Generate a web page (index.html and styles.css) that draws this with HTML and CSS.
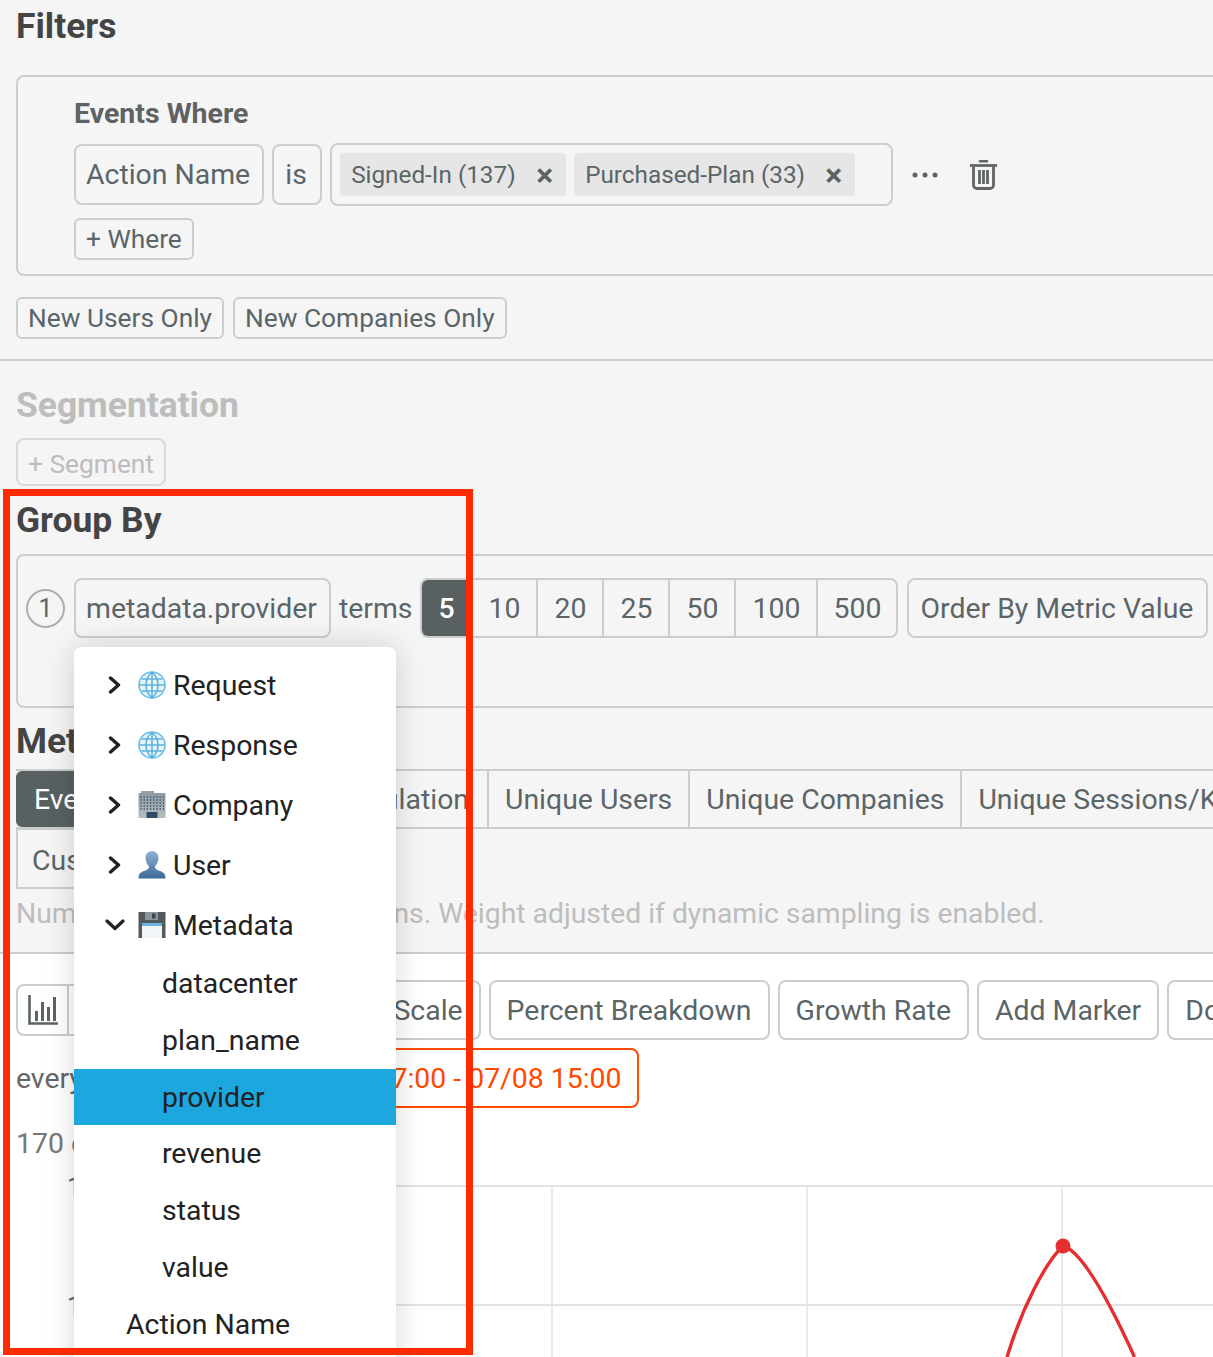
FILE: index.html
```html
<!DOCTYPE html>
<html lang="en">
<head>
<meta charset="utf-8">
<title>Filters</title>
<link rel="stylesheet" href="styles.css">
</head>
<body>
<svg class="defs" width="0" height="0" aria-hidden="true">
  <defs>
    <linearGradient id="userGrad" x1="0" y1="0" x2="0" y2="1"><stop offset="0" stop-color="#8fb3d3"/><stop offset="1" stop-color="#3d6a96"/></linearGradient>
    <linearGradient id="bldGrad" x1="0" y1="0" x2="0" y2="1"><stop offset="0" stop-color="#8f9aa3"/><stop offset="1" stop-color="#b6bec4"/></linearGradient>
    <symbol id="globe" viewBox="0 0 28 28">
      <circle cx="14" cy="14" r="13" fill="#e9f5fb" stroke="#6dc0e4" stroke-width="1.6"/>
      <path d="M1.5 14h25M3.5 8h21M3.5 20h21M14 1v26M14 1c-8 7-8 19 0 26M14 1c8 7 8 19 0 26" fill="none" stroke="#5cb2da" stroke-width="1.6"/>
    </symbol>
    <symbol id="building" viewBox="0 0 28 28">
      <rect x="3" y="0" width="13" height="3" fill="#9aa2a8"/>
      <rect x="0.5" y="2" width="27" height="25" fill="url(#bldGrad)"/>
      <path d="M3 5v15M6.200 5v15M9.400 5v15M12.600 5v15M15.800 5v15M19 5v15M22.200 5v15M25.400 5v15" stroke="#4a6172" stroke-width="1.200" stroke-dasharray="2 1"/>
      <rect x="8.500" y="21" width="11" height="6" fill="#2f4a63"/>
    </symbol>
    <symbol id="user" viewBox="0 0 28 28">
      <path d="M14 0c4 0 6.500 3 6.500 7s-2.300 7-3.500 8.500c0 2 1 3 5 4.500 4 1.500 5.500 3 5.500 7.500H.5c0-4.500 1.500-6 5.500-7.500s5-2.500 5-4.500C9.800 14 7.500 11 7.500 7S10 0 14 0z" fill="url(#userGrad)"/>
    </symbol>
    <symbol id="floppy" viewBox="0 0 28 28">
      <path d="M.5 1h27v26h-27z" fill="#52585c"/>
      <rect x="7" y="1" width="13" height="8" fill="#8d9499"/>
      <rect x="14" y="2.500" width="3.500" height="5" fill="#3e4347"/>
      <rect x="4" y="12" width="20" height="15" fill="#f2f5f7"/>
      <rect x="4" y="12" width="20" height="3" fill="#6fb0e3"/>
    </symbol>
    <symbol id="chev" viewBox="0 0 14 18"><path d="M2.500 2l8 7-8 7" fill="none" stroke="#222" stroke-width="3.400" stroke-linecap="round" stroke-linejoin="round"/></symbol>
    <symbol id="chevd" viewBox="0 0 20 14"><path d="M2 3l8 7.500L18 3" fill="none" stroke="#222" stroke-width="3.200" stroke-linecap="round" stroke-linejoin="round"/></symbol>
  </defs>
</svg>

<div class="top">
  <section class="filters">
    <h2>Filters</h2>
    <div class="box filter-box">
      <div class="label">Events Where</div>
      <div class="filter-row">
        <span class="btn tall">Action Name</span>
        <span class="btn tall is">is</span>
        <div class="tags">
          <span class="tag tag-a">Signed-In (137)<b class="x">×</b></span>
          <span class="tag tag-b">Purchased-Plan (33)<b class="x">×</b></span>
        </div>
        <svg class="dots" width="26" height="8" viewBox="0 0 26 8"><circle cx="3" cy="4" r="2.500"/><circle cx="13" cy="4" r="2.500"/><circle cx="23" cy="4" r="2.500"/></svg>
        <svg class="trash" width="27" height="30" viewBox="0 0 27 30"><path d="M10 1.300h7" stroke-width="2.600" stroke-linecap="round"/><path d="M0 5.500h27" stroke-width="2.800"/><path d="M3.500 7v18a3.500 3.500 0 0 0 3.500 3.500h13a3.500 3.500 0 0 0 3.500-3.500V7M9.500 10v14M13.500 10v14M17.500 10v14" stroke-width="2.800"/></svg>
      </div>
      <span class="btn small where">+ Where</span>
    </div>
    <div class="flags">
      <span class="btn small">New Users Only</span>
      <span class="btn small">New Companies Only</span>
    </div>
  </section>

  <section class="lower">
    <h2 class="muted-h">Segmentation</h2>
    <span class="btn segment">+ Segment</span>
    <h2 class="group-h">Group By</h2>
    <div class="box group-box">
      <div class="group-row">
        <span class="circle">1</span>
        <span class="btn tall">metadata.provider</span>
        <span class="terms">terms</span>
        <div class="seg">
          <span class="seg-i on">5</span><span class="seg-i">10</span><span class="seg-i">20</span><span class="seg-i">25</span><span class="seg-i">50</span><span class="seg-i">100</span><span class="seg-i">500</span>
        </div>
        <span class="btn tall order">Order By Metric Value</span>
      </div>
    </div>
    <h2 class="metrics-h">Metrics</h2>
    <div class="tabs">
      <span class="tab tab-on">Events</span>
      <span class="tab tab-calc">Calculation</span>
      <span class="tab">Unique Users</span>
      <span class="tab">Unique Companies</span>
      <span class="tab">Unique Sessions/Keys</span>
    </div>
    <div class="custom">Custom</div>
    <p class="desc">Number of API events or actions. Weight adjusted if dynamic sampling is enabled.</p>
  </section>
</div>

<section class="results">
  <div class="toolbar">
    <div class="icon-group">
      <span class="icon-cell">
        <svg width="30" height="30" viewBox="0 0 30 30"><path d="M1.500 0v28.500H30" fill="none" stroke="#5b6365" stroke-width="2.600"/><path d="M7 16h3v10H7zM13 7h3v19h-3zM19 12h3v14h-3zM25 2h3v24h-3z" fill="#5b6365"/></svg>
      </span>
      <span class="icon-rest"></span>
    </div>
    <span class="btn bar">Log Scale</span>
    <span class="btn bar">Percent Breakdown</span>
    <span class="btn bar">Growth Rate</span>
    <span class="btn bar">Add Marker</span>
    <span class="btn bar">Download</span>
  </div>
  <div class="range-row">
    <span class="every">every hour</span>
    <span class="range">07/07 17:00 - 07/08 15:00</span>
  </div>
  <div class="count">170 events</div>
  <svg class="chart" width="1213" height="194" viewBox="0 0 1213 194">
    <g stroke="#e3e3e3" stroke-width="2" fill="none">
      <path d="M76 23H1213M76 142H1213"/>
      <path d="M552 23V194M807 23V194M1062 23V194" stroke-width="1.500"/>
    </g>
    <g class="axis"><text x="67" y="33">1</text><text x="67" y="152">1</text></g>
    <path d="M1007 194C1022 145 1045 100 1063 83C1082 88 1110 140 1134.500 194" fill="none" stroke="#e32f2f" stroke-width="3.400"/>
    <circle cx="1063" cy="83" r="7.500" fill="#e32f2f"/>
  </svg>
</section>

<div class="menu">
  <div class="m-row"><span class="m-chev"><svg width="14" height="18"><use href="#chev"/></svg></span><svg class="m-ico" width="28" height="28"><use href="#globe"/></svg><span>Request</span></div>
  <div class="m-row"><span class="m-chev"><svg width="14" height="18"><use href="#chev"/></svg></span><svg class="m-ico" width="28" height="28"><use href="#globe"/></svg><span>Response</span></div>
  <div class="m-row"><span class="m-chev"><svg width="14" height="18"><use href="#chev"/></svg></span><svg class="m-ico" width="28" height="28"><use href="#building"/></svg><span>Company</span></div>
  <div class="m-row"><span class="m-chev"><svg width="14" height="18"><use href="#chev"/></svg></span><svg class="m-ico" width="28" height="28"><use href="#user"/></svg><span>User</span></div>
  <div class="m-row"><span class="m-chev"><svg width="20" height="14"><use href="#chevd"/></svg></span><svg class="m-ico" width="28" height="28"><use href="#floppy"/></svg><span>Metadata</span></div>
  <div class="m-child">datacenter</div>
  <div class="m-child">plan_name</div>
  <div class="m-child m-sel">provider</div>
  <div class="m-child">revenue</div>
  <div class="m-child">status</div>
  <div class="m-child">value</div>
  <div class="m-child m-root">Action Name</div>
</div>

<div class="highlight"></div>
</body>
</html>
```
FILE: styles.css
```css
* { box-sizing: border-box; }
html, body { margin: 0; padding: 0; }
body {
  position: relative;
  width: 1213px;
  height: 1357px;
  overflow: hidden;
  background: #fff;
  color: #5b6568;
  font-family: Roboto, "Liberation Sans", sans-serif;
  font-size: 28.400px;
}
.defs { position: absolute; }
.top { background: #f5f5f5; height: 954px; border-bottom: 2px solid #c8cfcd; }
h2 { margin: 0; height: 52px; line-height: 52px; font-size: 35.400px; font-weight: 700; color: #444; white-space: nowrap; }

.filters { height: 361px; padding-left: 16px; border-bottom: 2px solid #c8cfcd; }
.box { width: 1400px; border: 2px solid #c8cfcd; border-radius: 8px; }
.filter-box { margin-top: 23px; height: 201px; padding: 16px 0 0 56px; }
.label { height: 40px; line-height: 42px; font-size: 28.500px; font-weight: 700; color: #5f6263; white-space: nowrap; }
.filter-row { display: flex; align-items: center; height: 63px; margin-top: 10px; gap: 8px; }

.btn {
  display: inline-flex;
  align-items: center;
  justify-content: center;
  flex: none;
  border: 2px solid #c8cfcd;
  border-radius: 8px;
  white-space: nowrap;
}
.tall { height: 61px; padding: 0 12px 0 10px; }
.is { width: 50px; }
.small { height: 42px; padding: 0 10px; font-size: 26.300px; border-radius: 6px; }
.where { margin-top: 12px; }
.flags { display: flex; gap: 9px; margin-top: 21px; }

.tags {
  display: flex;
  align-items: center;
  gap: 8px;
  width: 563px;
  height: 63px;
  padding-left: 8px;
  border: 2px solid #c8cfcd;
  border-radius: 8px;
}
.tag {
  display: flex;
  align-items: center;
  justify-content: space-between;
  height: 43px;
  padding: 0 11px;
  background: #e6e6e6;
  border-radius: 4px;
  font-size: 24.300px;
  white-space: nowrap;
}
.tag-a { width: 226px; }
.tag-b { width: 281px; }
.x { font-size: 32px; font-weight: 700; line-height: 1; margin-right: 2px; color: #5f6263; }
.dots { margin-left: 11px; fill: #5b6365; flex: none; }
.trash { margin-left: 24px; fill: none; stroke: #606566; flex: none; }

.lower { padding: 18px 0 0 16px; }
.muted-h { color: #bdbdbd; }
.segment { height: 48px; width: 150px; margin-top: 7px; padding-top: 4px; font-size: 26.300px; color: #bdbdbd; border-color: #d6dad9; }
.group-h { margin-top: 8px; }
.group-box { margin-top: 8px; height: 154px; padding: 22px 0 0 8px; }
.group-row { display: flex; align-items: center; height: 60px; }
.circle {
  display: flex;
  align-items: center;
  justify-content: center;
  width: 39px;
  height: 39px;
  border: 2px solid #a9b0b0;
  border-radius: 50%;
  font-size: 25px;
  margin-right: 9px;
  flex: none;
}
.group-row .tall { height: 60px; }
.terms { margin-left: 8px; }
.seg {
  display: flex;
  height: 60px;
  margin-left: 8px;
  border: 2px solid #c8cfcd;
  border-radius: 8px;
  overflow: hidden;
}
.seg-i { display: flex; align-items: center; justify-content: center; width: 66px; border-left: 2px solid #c8cfcd; }
.seg-i:first-child { width: 48px; border-left: 0; }
.seg-i:nth-child(6) { width: 82px; }
.seg-i:nth-child(7) { width: 80px; }
.seg .on { background: #586062; color: #fff; font-weight: 500; }
.order { margin-left: 9px; width: 301px; }
.metrics-h { margin-top: 7px; }

.tabs { display: flex; width: 1400px; height: 60px; margin-top: 2px; border-top: 2px solid #c8cfcd; border-bottom: 2px solid #c8cfcd; }
.tab { display: flex; align-items: center; padding: 0 16px; white-space: nowrap; flex: none; border-right: 2px solid #c8cfcd; }
.tab-on { width: 120px; padding-left: 18px; background: #586062; color: #fff; border-radius: 6px 0 0 6px; }
.tab-calc { width: 353px; justify-content: flex-end; padding-right: 18px; }
.custom { width: 200px; height: 61px; line-height: 62px; padding-left: 14px; margin-top: -1px; border: 2px solid #c8cfcd; }
.desc { margin: 3px 0 0; height: 40px; line-height: 44px; color: #bdbdbd; white-space: nowrap; font-size: 28.320px; }

.results { padding-top: 26px; }
.toolbar { display: flex; align-items: center; gap: 8px; padding-left: 16px; width: 1400px; height: 60px; }
.icon-group { display: flex; width: 297px; height: 52px; border: 2px solid #c8cfcd; border-radius: 8px; flex: none; }
.icon-cell { display: flex; align-items: center; justify-content: center; width: 51px; border-right: 2px solid #c8cfcd; }
.bar { height: 60px; padding: 0 16px; }
.range-row { display: flex; align-items: center; height: 60px; margin-top: 8px; padding-left: 16px; }
.every { width: 256px; color: #666; white-space: nowrap; }
.range {
  display: flex;
  align-items: center;
  height: 60px;
  padding: 0 15px 0 19px;
  border: 2px solid #ff4a00;
  border-radius: 8px;
  color: #ff4a00;
  white-space: nowrap;
}
.count { height: 40px; line-height: 42px; margin-top: 15px; padding-left: 16px; color: #777; }
.chart { display: block; }
.axis { font-size: 26px; fill: #666; font-family: Roboto, sans-serif; }

.menu {
  position: absolute;
  left: 74px;
  top: 647px;
  width: 322px;
  height: 730px;
  padding-top: 8px;
  background: #fff;
  border-radius: 8px;
  box-shadow: 0 0 30px rgba(0, 0, 0, .16);
  color: #222;
}
.m-row { display: flex; align-items: center; height: 60px; }
.m-chev { display: flex; justify-content: center; width: 36px; margin: 0 5px 0 23px; flex: none; }
.m-ico { margin-right: 7px; flex: none; }
.m-child { height: 56.800px; line-height: 58.800px; padding-left: 88px; }
.m-sel { background: #1ca7df; }
.m-root { padding-left: 52px; }

.highlight {
  position: absolute;
  left: 3px;
  top: 489px;
  width: 470px;
  height: 866px;
  border: 7px solid #ff2a00;
}
```
